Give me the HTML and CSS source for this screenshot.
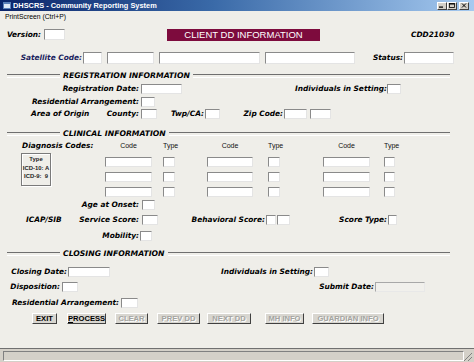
FILE: index.html
```html
<!DOCTYPE html>
<html lang="en">
<head>
  <meta charset="UTF-8" />
  <meta name="viewport" content="width=device-width, initial-scale=1.0" />
  <title>DHSCRS - Community Reporting System</title>
  <link rel="stylesheet" href="styles.css">
</head>
<body>
  <div class="window">
    <div class="titlebar">
      <span class="appicon"></span>
      <span class="title">DHSCRS - Community Reporting System</span>
      <div class="caption-btns">
        <span class="cbtn">
          <svg width="6" height="5" viewBox="0 0 6 5"><rect x="0" y="3.5" width="4" height="1.2" fill="#000"/></svg>
        </span>
        <span class="cbtn">
          <svg width="6" height="5" viewBox="0 0 6 5"><rect x="0.5" y="0.5" width="5" height="4" fill="none" stroke="#000" stroke-width="0.8"/><rect x="0.5" y="0.5" width="5" height="1" fill="#000"/></svg>
        </span>
        <span class="cbtn close">
          <svg width="6" height="5" viewBox="0 0 6 5"><path d="M1 0.5 L5 4.5 M5 0.5 L1 4.5" stroke="#000" stroke-width="1"/></svg>
        </span>
      </div>
    </div>

    <div class="menubar">PrintScreen (Ctrl+P)</div>

    <div class="form">
      <div class="row r-version">
        <span class="lbl l41">Version:</span>
        <span class="in w21 ml3"></span>
        <div class="banner">CLIENT DD INFORMATION</div>
        <span class="lbl formid">CDD21030</span>
      </div>

      <div class="row r-satellite">
        <span class="lbl l82 navy">Satellite Code:</span>
        <span class="in w19 ml1"></span>
        <span class="in w47 ml5"></span>
        <span class="in w101 ml5"></span>
        <span class="in w90 ml5"></span>
        <span class="lbl l48">Status:</span>
        <span class="in w50 ml1"></span>
      </div>

      <div class="section s-reg"><span>REGISTRATION INFORMATION</span></div>

      <div class="row r-reg1">
        <span class="lbl l139">Registration Date:</span>
        <span class="in w41 ml2"></span>
        <span class="lbl l205">Individuals in Setting:</span>
        <span class="in w14"></span>
      </div>
      <div class="row r-reg2">
        <span class="lbl l139">Residential Arrangement:</span>
        <span class="in w14 ml2"></span>
      </div>
      <div class="row r-reg3">
        <span class="lbl left area">Area of Origin</span>
        <span class="lbl l39">County:</span>
        <span class="in w16 ml2"></span>
        <span class="lbl l47">Twp/CA:</span>
        <span class="in w15 ml1"></span>
        <span class="lbl l63">Zip Code:</span>
        <span class="in w23 ml1"></span>
        <span class="in w21 ml3"></span>
      </div>

      <div class="section s-clin"><span>CLINICAL INFORMATION</span></div>

      <div class="dx">
        <div class="dx-side">
          <span class="lbl">Diagnosis Codes:</span>
          <div class="typebox">
            <div>Type</div>
            <div>ICD-10: A</div>
            <div>ICD-9:&nbsp; 9</div>
          </div>
        </div>
        <div class="dx-grid">
          <span class="colhead">Code</span>
          <span class="colhead type">Type</span>
          <span class="colhead">Code</span>
          <span class="colhead type">Type</span>
          <span class="colhead">Code</span>
          <span class="colhead type">Type</span>

          <span class="in"></span><span class="in"></span><span class="in"></span><span class="in"></span><span class="in"></span><span class="in"></span>
          <span class="in"></span><span class="in"></span><span class="in"></span><span class="in"></span><span class="in"></span><span class="in"></span>
          <span class="in"></span><span class="in"></span><span class="in"></span><span class="in"></span><span class="in"></span><span class="in"></span>
        </div>
      </div>

      <div class="row r-age">
        <span class="lbl l139">Age at Onset:</span>
        <span class="in w13 ml3"></span>
      </div>
      <div class="row r-icap">
        <span class="lbl left icap">ICAP/SIB</span>
        <span class="lbl l72">Service Score:</span>
        <span class="in w16 ml3"></span>
        <span class="lbl l107">Behavioral Score:</span>
        <span class="in w10 ml1"></span>
        <span class="in w13 ml1"></span>
        <span class="lbl l97">Score Type:</span>
        <span class="in w9 ml1"></span>
      </div>
      <div class="row r-mobility">
        <span class="lbl l139">Mobility:</span>
        <span class="in w12 ml1"></span>
      </div>

      <div class="section s-close"><span>CLOSING INFORMATION</span></div>

      <div class="row r-close1">
        <span class="lbl l67">Closing Date:</span>
        <span class="in w42 ml1"></span>
        <span class="lbl l203">Individuals in Setting:</span>
        <span class="in w15 ml1"></span>
      </div>
      <div class="row r-close2">
        <span class="lbl l60">Disposition:</span>
        <span class="in w16 ml2"></span>
        <span class="lbl l296">Submit Date:</span>
        <span class="in w50 ml1 disabled"></span>
      </div>
      <div class="row r-close3">
        <span class="lbl l119">Residential Arrangement:</span>
        <span class="in w17 ml2"></span>
      </div>

      <div class="buttons">
        <button class="btn b-exit">EXIT</button>
        <button class="btn b-process"><u>P</u>ROCESS</button>
        <button class="btn b-clear" disabled>CLEAR</button>
        <button class="btn b-prev" disabled>PREV DD</button>
        <button class="btn b-next" disabled>NEXT DD</button>
        <button class="btn b-mh" disabled>MH INFO</button>
        <button class="btn b-guardian" disabled>GUARDIAN INFO</button>
      </div>
    </div>

    <div class="statusbar">
      <div class="sb-panel"></div>
      <span class="grip"></span>
    </div>
  </div>
</body>
</html>
```

FILE: styles.css
```css
:root {
  --bg: #efeee9;
  --face: #d4d0c8;
  --shadow: #808080;
  --label: 'DejaVu Sans', Verdana, sans-serif;
  --ui: 'Liberation Sans', Arial, sans-serif;
}

* {
  box-sizing: border-box;
}

body {
  margin: 0;
  background: var(--bg);
  font-family: var(--ui);
}

.window {
  width: 474px;
  height: 362px;
  display: flex;
  flex-direction: column;
  overflow: hidden;
  background: var(--bg);
}

/* title bar */
.titlebar {
  height: 11px;
  display: flex;
  align-items: center;
  padding: 0 2px 0 3px;
  background: linear-gradient(to right, #0a246a, #3a6aa8 45%, #a6caf0);
}

.appicon {
  width: 8px;
  height: 7px;
  margin-right: 2px;
  background: #dfe8f5;
  border: 1px solid #5b7fb8;
  border-top-width: 2px;
}

.title {
  color: #fff;
  font: bold 7.4px var(--ui);
  white-space: nowrap;
}

.caption-btns {
  margin-left: auto;
  display: flex;
  margin-right: 3px;
}

.cbtn {
  width: 10px;
  height: 8px;
  display: flex;
  align-items: center;
  justify-content: center;
  background: var(--face);
  border: 1px solid;
  border-color: #fff #404040 #404040 #fff;
}

.cbtn.close {
  margin-left: 2px;
}

/* menu */
.menubar {
  height: 12px;
  line-height: 12px;
  padding-left: 5px;
  font-size: 6.8px;
  color: #000;
  background: var(--bg);
}

/* form rows */
.row {
  display: flex;
  align-items: center;
  height: 10px;
}

.lbl {
  display: block;
  flex: none;
  font: italic bold 7.4px var(--label);
  color: #000;
  text-align: right;
  white-space: nowrap;
  line-height: 10px;
}

.lbl.left {
  text-align: left;
}

.navy {
  color: #1c1f5e;
}

.in {
  display: block;
  flex: none;
  height: 10px;
  background: #fff;
  border: 1px solid;
  border-color: #8a8a8a #e4e4e4 #e4e4e4 #8a8a8a;
}

.in.disabled {
  background: #f1f0ec;
  border-color: #a8a8a8 #e8e8e8 #e8e8e8 #a8a8a8;
}

.r-version {
  height: 12px;
  margin-top: 6px;
  align-items: flex-start;
}

.r-version .in {
  height: 11px;
}

.r-version .lbl {
  line-height: 11px;
}

.banner {
  width: 153px;
  height: 12px;
  margin-left: 102px;
  background: #7d0b3d;
  color: #fff;
  font: 9.5px/12px var(--ui);
  text-align: center;
}

.formid {
  margin-left: 91px;
  line-height: 12px;
}

.r-satellite {
  height: 12px;
  margin-top: 11px;
}

.r-satellite .in {
  height: 12px;
}

/* section dividers */
.section {
  display: flex;
  align-items: center;
  height: 9px;
  margin: 0 24px 0 7px;
  font: italic bold 7.7px var(--label);
  color: #000;
  white-space: nowrap;
}

.section::before,
.section::after {
  content: "";
  height: 2px;
  border-top: 1px solid #6f6f6f;
  border-bottom: 1px solid #fff;
}

.section::before {
  width: 53px;
  margin-right: 3px;
}

.section::after {
  flex: 1;
  margin-left: 3px;
}

.s-reg { margin-top: 7px; }
.r-reg1 { margin-top: 4px; }
.r-reg2 { margin-top: 3px; }
.r-reg3 { margin-top: 2px; }
.s-clin { margin-top: 10px; }
.r-age { margin-top: 3px; }
.r-icap { margin-top: 5px; }
.r-mobility { margin-top: 6px; }
.s-close { margin-top: 8px; }
.r-close1 { margin-top: 9px; }
.r-close2 { margin-top: 5px; }
.r-close3 { margin-top: 6px; }

.area {
  width: 69px;
  margin-left: 31px;
}

.icap {
  width: 41px;
  margin-left: 26px;
}

/* label widths */
.l39 { width: 39px; }
.l41 { width: 41px; }
.l47 { width: 47px; }
.l48 { width: 48px; }
.l60 { width: 60px; }
.l63 { width: 63px; }
.l67 { width: 67px; }
.l72 { width: 72px; }
.l82 { width: 82px; }
.l97 { width: 97px; }
.l107 { width: 107px; }
.l119 { width: 119px; }
.l139 { width: 139px; }
.l203 { width: 203px; }
.l205 { width: 205px; }
.l296 { width: 296px; }

/* input widths */
.w9 { width: 9px; }
.w10 { width: 10px; }
.w12 { width: 12px; }
.w13 { width: 13px; }
.w14 { width: 14px; }
.w15 { width: 15px; }
.w16 { width: 16px; }
.w17 { width: 17px; }
.w19 { width: 19px; }
.w21 { width: 21px; }
.w23 { width: 23px; }
.w41 { width: 41px; }
.w42 { width: 42px; }
.w47 { width: 47px; }
.w50 { width: 50px; }
.w90 { width: 90px; }
.w101 { width: 101px; }

.ml1 { margin-left: 1px; }
.ml2 { margin-left: 2px; }
.ml3 { margin-left: 3px; }
.ml5 { margin-left: 5px; }

/* diagnosis codes */
.dx {
  display: flex;
  margin-top: 3px;
}

.dx-side {
  width: 105px;
  padding-left: 21px;
}

.dx-side .lbl {
  text-align: left;
  padding-left: 1px;
  height: 11px;
  line-height: 9px;
}

.typebox {
  width: 30px;
  height: 33px;
  margin-top: 1px;
  padding-top: 1px;
  border: 1px solid #7a7a7a;
  box-shadow: inset 1px 1px #fff, 1px 1px #fff;
  font: bold 5.9px/8.5px var(--ui);
  color: #222;
  text-align: center;
  white-space: nowrap;
}

.dx-grid {
  display: grid;
  grid-template-columns: 47px 11px 12px 32px 46px 15px 12px 43px 47px 14px 11px;
  grid-template-rows: 11px 10px 10px 10px;
  row-gap: 5px;
}

.dx-grid > :nth-child(6n+1) { grid-column: 1; }
.dx-grid > :nth-child(6n+2) { grid-column: 3; }
.dx-grid > :nth-child(6n+3) { grid-column: 5; }
.dx-grid > :nth-child(6n+4) { grid-column: 7; }
.dx-grid > :nth-child(6n+5) { grid-column: 9; }
.dx-grid > :nth-child(6n+6) { grid-column: 11; }

.colhead {
  font: 7px/9px var(--ui);
  color: #111;
  text-align: center;
  white-space: nowrap;
}

.colhead.type {
  text-align: left;
}

/* buttons */
.buttons {
  display: flex;
  height: 11px;
  margin-top: 5px;
  padding-left: 32px;
}

.btn {
  height: 11px;
  padding: 0;
  margin: 0;
  background: #d8d6d0;
  border: 1px solid;
  border-color: #fff #404040 #404040 #fff;
  font: bold 7.6px/9px var(--ui);
  color: #000;
  white-space: nowrap;
  overflow: hidden;
}

.btn:disabled {
  color: #a4a4a0;
  text-shadow: 1px 1px #fff;
}

.b-exit { width: 25px; }
.b-process { width: 39px; margin-left: 10px; }
.b-clear { width: 33px; margin-left: 9px; }
.b-prev { width: 43px; margin-left: 9px; }
.b-next { width: 44px; margin-left: 7px; }
.b-mh { width: 39px; margin-left: 14px; }
.b-guardian { width: 72px; margin-left: 8px; }

/* status bar */
.statusbar {
  margin-top: auto;
  height: 14px;
  display: flex;
  padding: 2px 2px 1px 3px;
  background: var(--face);
  border-top: 1px solid #707070;
}

.sb-panel {
  flex: 1;
  border: 1px solid;
  border-color: #808080 #fff #fff #808080;
}

.grip {
  width: 8px;
  align-self: flex-end;
  height: 8px;
  background: linear-gradient(135deg, transparent 45%, #808080 45%, #808080 55%, transparent 55%, transparent 70%, #808080 70%, #808080 80%, transparent 80%);
}
```
